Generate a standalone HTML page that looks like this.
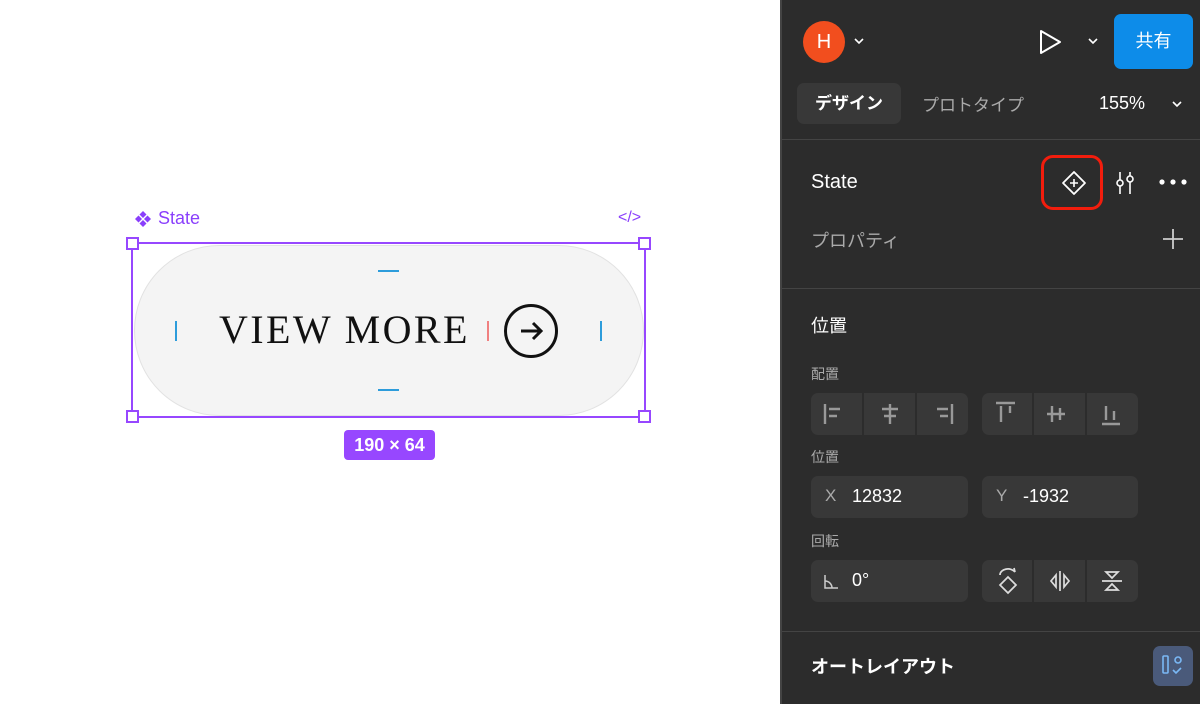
<!DOCTYPE html>
<html><head><meta charset="utf-8"><style>
*{margin:0;padding:0;box-sizing:border-box}
body{width:1200px;height:704px;overflow:hidden;background:#fff;position:relative;font-family:"Liberation Sans","Noto Sans CJK JP",sans-serif}
.a{position:absolute}
.p{left:780px;top:0;width:420px;height:704px;background:#2c2c2c;border-left:2px solid #444}
.t{color:#fff;font-size:17px}
.g{color:#aaa}
.box{background:#383838;border-radius:7px}
.hr{left:782px;width:418px;height:1px;background:#444}
.h{width:13px;height:13px;border:2px solid #9747ff;background:#fff}
</style></head><body>
<!-- canvas -->
<svg class="a" style="left:134px;top:210px" width="18" height="18"><g fill="#8a3ffc"><path d="M9 1l3.5 3.5L9 8 5.5 4.5Z"/><path d="M9 10l3.5 3.5L9 17l-3.5-3.5Z"/><path d="M1 9l3.5-3.5L8 9l-3.5 3.5Z"/><path d="M10 9l3.5-3.5L17 9l-3.5 3.5Z"/></g></svg>
<div class="a" style="left:158px;top:208px;color:#8a3ffc;font-size:18px">State</div>
<div class="a" style="left:618px;top:209px;color:#8a3ffc;font-size:16px">&lt;/&gt;</div>
<div class="a" style="left:134px;top:245px;width:510px;height:171px;background:#f4f4f4;border:1px solid #e2e2e2;border-radius:86px"></div>
<div class="a" style="left:131px;top:242px;width:515px;height:176px;border:2px solid #9747ff"></div>
<div class="a h" style="left:126px;top:237px"></div>
<div class="a h" style="left:638px;top:237px"></div>
<div class="a h" style="left:126px;top:410px"></div>
<div class="a h" style="left:638px;top:410px"></div>
<div class="a" style="left:378px;top:270px;width:21px;height:2px;background:#2d9cdb"></div>
<div class="a" style="left:378px;top:389px;width:21px;height:2px;background:#2d9cdb"></div>
<div class="a" style="left:175px;top:321px;width:2px;height:20px;background:#2d9cdb"></div>
<div class="a" style="left:600px;top:321px;width:2px;height:20px;background:#2d9cdb"></div>
<div class="a" style="left:487px;top:321px;width:2px;height:20px;background:#f08080"></div>
<div class="a" style="left:219px;top:306px;font-family:'Liberation Serif',serif;font-size:40px;color:#111;letter-spacing:2.4px;white-space:nowrap">VIEW MORE</div>
<svg class="a" style="left:503px;top:303px" width="56" height="56" viewBox="0 0 56 56"><circle cx="28" cy="28" r="25.5" fill="none" stroke="#111" stroke-width="3"/><path d="M18 28H38M30 20l8 8-8 8" fill="none" stroke="#111" stroke-width="3"/></svg>
<div class="a" style="left:344px;top:430px;width:91px;height:30px;background:#9747ff;border-radius:4px;color:#fff;font-size:18px;font-weight:bold;text-align:center;line-height:30px">190 × 64</div>
<!-- panel -->
<div class="a p"></div>
<div class="a" style="left:803px;top:21px;width:42px;height:42px;border-radius:50%;background:#f24e1e;color:#fff;font-size:20px;text-align:center;line-height:42px">H</div>
<svg class="a" style="left:853px;top:36px" width="12" height="10"><path d="M2 3l4 4 4-4" fill="none" stroke="#fff" stroke-width="1.6"/></svg>
<svg class="a" style="left:1038px;top:28px" width="26" height="28"><path d="M3 3L22 14 3 25Z" fill="none" stroke="#fff" stroke-width="2" stroke-linejoin="round"/></svg>
<svg class="a" style="left:1087px;top:36px" width="12" height="10"><path d="M2 3l4 4 4-4" fill="none" stroke="#fff" stroke-width="1.6"/></svg>
<div class="a" style="left:1114px;top:14px;width:79px;height:55px;background:#0d8ce9;border-radius:7px;color:#fff;font-size:18px;text-align:center;line-height:55px">共有</div>
<div class="a" style="left:797px;top:83px;width:104px;height:41px;background:#383838;border-radius:7px;color:#fff;font-size:17px;font-weight:bold;text-align:center;line-height:41px">デザイン</div>
<div class="a g" style="left:922px;top:91px;font-size:17px">プロトタイプ</div>
<div class="a t" style="left:1099px;top:93px;font-size:18px">155%</div>
<svg class="a" style="left:1171px;top:99px" width="12" height="10"><path d="M2 3l4 4 4-4" fill="none" stroke="#fff" stroke-width="1.6"/></svg>
<div class="a hr" style="top:139px"></div>
<div class="a t" style="left:811px;top:171px;font-size:20px">State</div>
<div class="a" style="left:1041px;top:155px;width:62px;height:55px;border:3px solid #f21d0d;border-radius:12px"></div>
<svg class="a" style="left:1061px;top:170px" width="26" height="26"><path d="M13 2L24 13 13 24 2 13Z" fill="none" stroke="#fff" stroke-width="1.8" stroke-linejoin="round"/><path d="M13 9v8M9 13h8" stroke="#fff" stroke-width="1.6"/></svg>
<svg class="a" style="left:1112px;top:170px" width="26" height="26"><path d="M8 2v8M8 16v8M18 2v4M18 12v12" stroke="#fff" stroke-width="1.6"/><circle cx="8" cy="13" r="3" fill="none" stroke="#fff" stroke-width="1.6"/><circle cx="18" cy="9" r="3" fill="none" stroke="#fff" stroke-width="1.6"/></svg>
<svg class="a" style="left:1158px;top:176px" width="30" height="12" fill="#fff"><circle cx="4" cy="6" r="2.6"/><circle cx="15" cy="6" r="2.6"/><circle cx="26" cy="6" r="2.6"/></svg>
<div class="a g" style="left:811px;top:227px;font-size:18px">プロパティ</div>
<svg class="a" style="left:1162px;top:228px" width="22" height="22"><path d="M11 1v20M1 11h20" stroke="#ccc" stroke-width="1.8"/></svg>
<div class="a hr" style="top:288px"></div>
<div class="a t" style="left:811px;top:312px;font-size:18px">位置</div>
<div class="a g" style="left:811px;top:364px;font-size:14px">配置</div>
<div class="a box" style="left:811px;top:393px;width:157px;height:42px"></div>
<div class="a" style="left:862px;top:393px;width:2px;height:42px;background:#2c2c2c"></div>
<div class="a" style="left:915px;top:393px;width:2px;height:42px;background:#2c2c2c"></div>
<div class="a box" style="left:982px;top:393px;width:156px;height:42px"></div>
<div class="a" style="left:1032px;top:393px;width:2px;height:42px;background:#2c2c2c"></div>
<div class="a" style="left:1085px;top:393px;width:2px;height:42px;background:#2c2c2c"></div>
<svg class="a" style="left:811px;top:393px" width="327" height="42" stroke="#999" stroke-width="2.4" fill="none">
<path d="M14 11v20M18 16h11M18 23h8"/><path d="M79 11v20M71 16h16M73 23h12"/><path d="M141 11v20M126 16h11M129 23h8"/>
<path d="M185 10h19M190 13v16M199 13v7"/><path d="M236 21h18M241 13v16M249 15v12"/><path d="M291 31h18M295 13v14M303 18v9"/></svg>
<div class="a g" style="left:811px;top:447px;font-size:14px">位置</div>
<div class="a box" style="left:811px;top:476px;width:157px;height:42px"></div>
<div class="a box" style="left:982px;top:476px;width:156px;height:42px"></div>
<div class="a g" style="left:825px;top:486px;font-size:17px">X</div>
<div class="a t" style="left:852px;top:486px;font-size:18px">12832</div>
<div class="a g" style="left:996px;top:486px;font-size:17px">Y</div>
<div class="a t" style="left:1023px;top:486px;font-size:18px">-1932</div>
<div class="a g" style="left:811px;top:531px;font-size:14px">回転</div>
<div class="a box" style="left:811px;top:560px;width:157px;height:42px"></div>
<div class="a box" style="left:982px;top:560px;width:156px;height:42px"></div>
<div class="a" style="left:1032px;top:560px;width:2px;height:42px;background:#2c2c2c"></div>
<div class="a" style="left:1085px;top:560px;width:2px;height:42px;background:#2c2c2c"></div>
<svg class="a" style="left:822px;top:572px" width="20" height="18"><path d="M3 3v13h13M3 9a7 7 0 0 1 7 7" fill="none" stroke="#ccc" stroke-width="1.5"/></svg>
<div class="a t" style="left:852px;top:570px;font-size:18px">0°</div>
<svg class="a" style="left:982px;top:560px" width="156" height="42" fill="none" stroke="#ddd" stroke-width="1.7"><path d="M18 15a8 6 0 0 1 15-3l-1-4"/><path d="M26 17l8 8-8 8-8-8Z"/><path d="M78 11v20M74 15l-5 6 5 6ZM82 15l5 6-5 6Z"/><path d="M120 21h20M124 12h12l-6 6ZM124 30h12l-6-6Z"/></svg>
<div class="a hr" style="top:631px"></div>
<div class="a t" style="left:811px;top:653px;font-size:18px;font-weight:bold">オートレイアウト</div>
<div class="a" style="left:1153px;top:646px;width:40px;height:40px;background:#4a5a7a;border-radius:7px"></div>
<svg class="a" style="left:1160px;top:653px" width="26" height="26" fill="none" stroke="#7ab8f5" stroke-width="1.6"><rect x="3" y="3" width="5" height="17" rx="1"/><circle cx="18" cy="7" r="3"/><path d="M13 17l3 3 5-5"/></svg>
</body></html>
